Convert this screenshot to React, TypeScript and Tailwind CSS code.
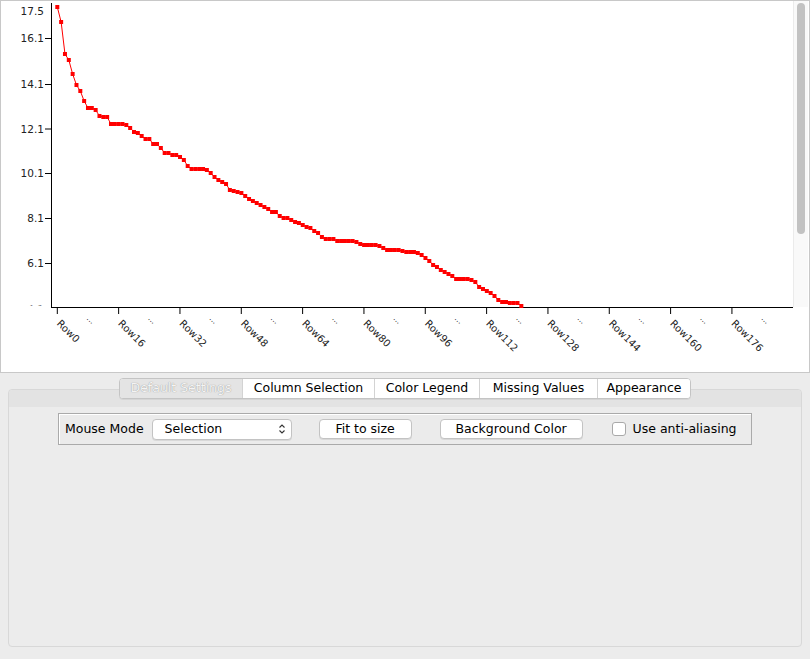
import React from 'react'

// pixel-space control points traced from the plotted curve (x, y)
const CTRL: [number, number][] = [
  [57, 6], [61, 21], [65, 54], [69, 60], [73, 75], [77, 87], [80, 90], [84, 101], [88, 108], [92, 108],
  [96, 110], [100, 117], [108, 117], [110, 124], [121, 124], [125, 125], [129, 126], [133, 132], [137, 133],
  [141, 135], [145, 139], [149, 139], [153, 144], [157, 144], [161, 148], [165, 153], [169, 153], [173, 155],
  [177, 155], [180, 157], [184, 160], [188, 166], [192, 169], [203, 169], [207, 170], [211, 173], [215, 178],
  [219, 180], [222, 182], [226, 184], [230, 190], [234, 191], [238, 192], [242, 193], [246, 197], [249, 199],
  [253, 201], [257, 203], [261, 205], [265, 207], [268, 209], [272, 212], [276, 212], [280, 216], [284, 218],
  [288, 218], [292, 221], [296, 222], [300, 223], [304, 226], [309, 227], [313, 230], [317, 232], [321, 236],
  [325, 239], [335, 239], [337, 241], [355, 241], [358, 243], [362, 245], [378, 245], [382, 247], [386, 250],
  [400, 250], [404, 252], [416, 252], [420, 254], [424, 257], [430, 261], [433, 265], [437, 267], [441, 270],
  [445, 272], [449, 274], [453, 277], [457, 279], [470, 279], [474, 281], [477, 284], [480, 288], [484, 290],
  [488, 292], [492, 294], [496, 297], [500, 302], [518, 303], [522, 306],
]

const interp = (x: number) => {
  if (x <= CTRL[0][0]) return CTRL[0][1]
  for (let i = 1; i < CTRL.length; i++) {
    const [x1, y1] = CTRL[i]
    const [x0, y0] = CTRL[i - 1]
    if (x <= x1) return y0 + ((x - x0) / (x1 - x0)) * (y1 - y0)
  }
  return CTRL[CTRL.length - 1][1]
}

const POINTS = Array.from({ length: 122 }, (_, i) => {
  const x = 57.3 + i * 3.835
  return [x, Math.round(interp(x))] as [number, number]
})

const Y_TICKS: [string, number][] = [
  ['16.1', 38], ['14.1', 84], ['12.1', 128.5], ['10.1', 173], ['8.1', 218], ['6.1', 263],
]

const X_TICKS = Array.from({ length: 12 }, (_, k) => ({ label: `Row${k * 16}`, x: 57.3 + k * 61.33 }))

const Chart: React.FC = () => (
  <svg width={792} height={371} viewBox="1 1 792 371" className="block" fontFamily="'DejaVu Sans', sans-serif">
    <defs>
      <clipPath id="plotclip">
        <rect x="0" y="0" width="800" height="305.5" />
      </clipPath>
    </defs>

    {/* y axis */}
    <line x1="51.5" y1="3" x2="51.5" y2="308" stroke="#000" strokeWidth="1" />
    <text x="44" y="12" fontSize="10.5" textAnchor="end" dominantBaseline="middle" fill="#222">17.5</text>
    {Y_TICKS.map(([label, y]) => (
      <g key={label}>
        <line x1="45" y1={y + 0.5} x2="51.5" y2={y + 0.5} stroke="#000" />
        <text x="44" y={y + 1} fontSize="10.5" textAnchor="end" dominantBaseline="middle" fill="#222">{label}</text>
      </g>
    ))}
    <text x="44" y="310" fontSize="10.5" textAnchor="end" dominantBaseline="middle" fill="#222" clipPath="url(#plotclip)">4.1</text>

    {/* x axis */}
    <line x1="51.5" y1="307.5" x2="793" y2="307.5" stroke="#000" strokeWidth="1" />
    {X_TICKS.map(t => (
      <g key={t.label}>
        <line x1={t.x} y1="307.5" x2={t.x} y2="314" stroke="#000" />
        <text
          x={t.x + 4}
          y="319"
          fontSize="10"
          fill="#222"
          dominantBaseline="hanging"
          transform={`rotate(45 ${t.x + 4} 319)`}
        >
          {t.label}
        </text>
        <text
          x={t.x + 33}
          y="315"
          fontSize="8"
          fill="#222"
          dominantBaseline="hanging"
          transform={`rotate(45 ${t.x + 33} 315)`}
        >
          ...
        </text>
      </g>
    ))}

    {/* data */}
    <polyline points={POINTS.map(p => p.join(',')).join(' ')} fill="none" stroke="#ff0000" strokeWidth="1" />
    {POINTS.map(([x, y], i) => (
      <rect key={i} x={x - 2} y={y - 2} width="4" height="4" fill="#ff0000" />
    ))}
  </svg>
)

const TABS = [
  { label: 'Default Settings', w: 'w-[122px]' },
  { label: 'Column Selection', w: 'w-[132px]' },
  { label: 'Color Legend', w: 'w-[105px]' },
  { label: 'Missing Values', w: 'w-[118px]' },
  { label: 'Appearance', w: 'w-[93px]' },
]

export default function App() {
  return (
    <div className="w-[810px] h-[659px] bg-[#ececec] flex flex-col font-['DejaVu_Sans',sans-serif] text-[12.5px] text-black overflow-hidden">
      {/* chart panel */}
      <div className="h-[373px] border border-[#c8c8c8] bg-white flex">
        <Chart />
        <div className="w-[15px] flex flex-col">
          <div className="h-[306px] bg-[#f9f9f9] border-l border-[#ebebeb] pl-[3px] pt-[2px]">
            <div className="h-[231px] w-[8px] rounded-full bg-[#c2c2c2]" />
          </div>
        </div>
      </div>

      {/* settings area */}
      <div className="flex-1 flex flex-col pt-[5px]">
        <div className="relative z-10 flex justify-center">
          <div className="flex h-[21px] rounded-[4px] border border-[#c4c4c4] overflow-hidden bg-white shadow-[0_1px_0_rgba(0,0,0,0.06)]">
            {TABS.map((t, i) => (
              <div
                key={t.label}
                className={`${t.w} flex items-center justify-center ${i > 0 ? 'border-l border-[#d3d3d3]' : ''} ${
                  i === 0
                    ? 'bg-[#e4e4e4] text-[#f4f4f4] [text-shadow:0_0_1px_#7e7e7e]'
                    : 'bg-white text-black'
                }`}
              >
                {t.label}
              </div>
            ))}
          </div>
        </div>

        <div className="mx-[8px] -mt-[10px] h-[258px] rounded-[4px] border border-[#d8d8d8] bg-[#ececec] flex flex-col">
          <div className="h-[17px] bg-[#e3e3e3] rounded-t-[4px]" />
          <div className="flex justify-center pt-[6px]">
            <div className="w-[694px] h-[32px] border border-[#aaaaaa] shadow-[inset_1px_1px_0_#ffffff] bg-[#ebebeb] flex items-center pl-[6px]">
              <span className="mr-[8px]">Mouse Mode</span>
              <div className="w-[140px] h-[21px] bg-white border border-[#c3c3c3] rounded-[4px] flex items-center justify-between pl-[12px] pr-[5px] shadow-[0_1px_0_rgba(0,0,0,0.08)]">
                <span>Selection</span>
                <svg width="8" height="12" viewBox="0 0 8 12" fill="none" stroke="#333" strokeWidth="1.1">
                  <path d="M1.5 4.5 L4 2 L6.5 4.5" />
                  <path d="M1.5 7.5 L4 10 L6.5 7.5" />
                </svg>
              </div>
              <div className="ml-[27px] w-[93px] h-[20px] bg-white border border-[#c3c3c3] rounded-[4px] flex items-center justify-center shadow-[0_1px_0_rgba(0,0,0,0.08)]">
                Fit to size
              </div>
              <div className="ml-[28px] w-[143px] h-[20px] bg-white border border-[#c3c3c3] rounded-[4px] flex items-center justify-center shadow-[0_1px_0_rgba(0,0,0,0.08)]">
                Background Color
              </div>
              <div className="ml-[29px] w-[14px] h-[14px] bg-white border border-[#a9a9a9] rounded-[3px]" />
              <span className="ml-[7px]">Use anti-aliasing</span>
            </div>
          </div>
        </div>
      </div>
    </div>
  )
}
